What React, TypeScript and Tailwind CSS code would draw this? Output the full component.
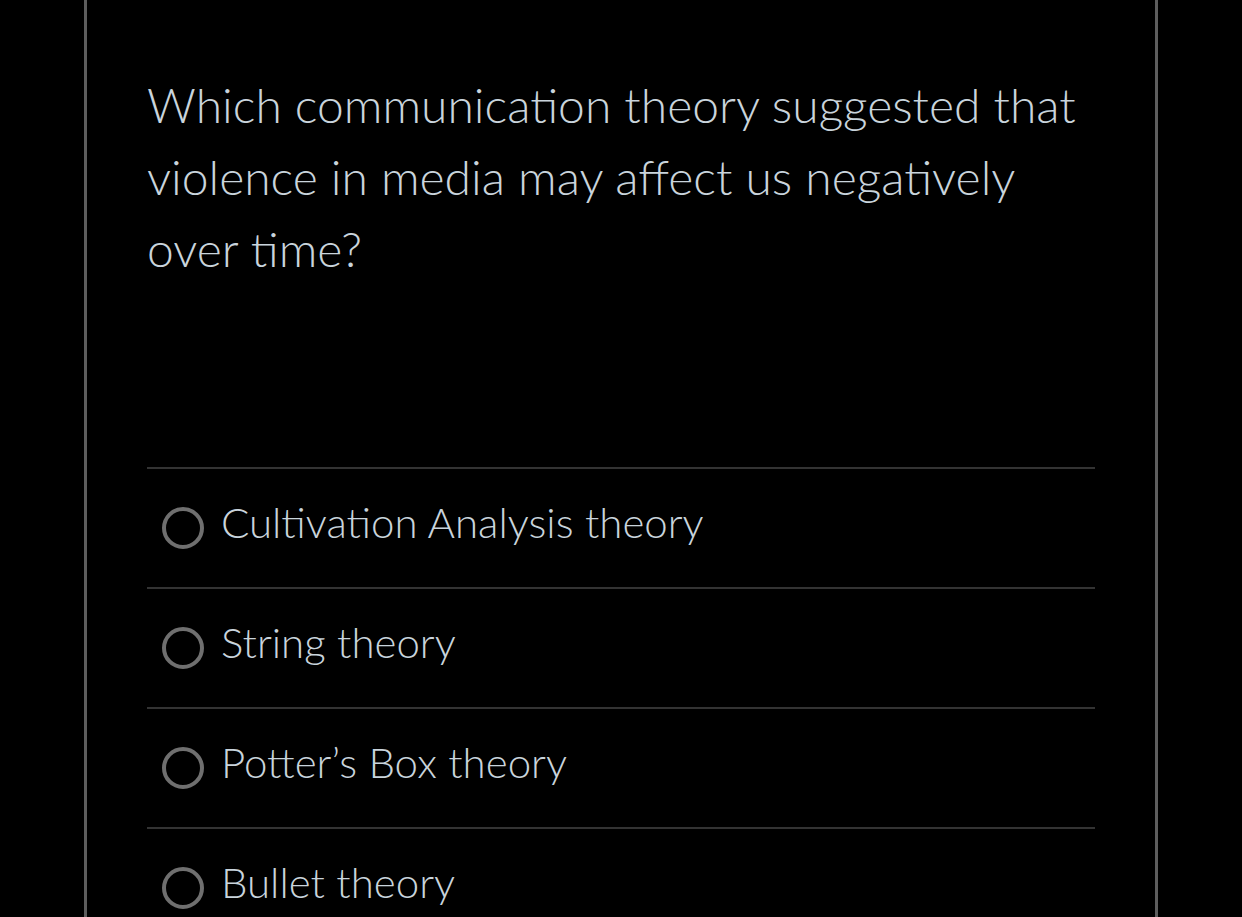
export default function App() {
  const options = [
    "Cultivation Analysis theory",
    "String theory",
    "Potter’s Box theory",
    "Bullet theory",
  ];

  return (
    <div className="min-h-screen h-[917px] overflow-hidden bg-black font-['Lato','Liberation_Sans',sans-serif]">
      <div className="ml-[84px] w-[1074px] min-h-[917px] border-x-[3px] border-[#5d5d5d] px-[60px] pt-[69px]">
        <h1 className="text-[48px] font-light leading-[72px] text-[#c9d4dc] pr-[10px]">
          Which communication theory suggested that violence in media may affect us negatively over time?
        </h1>

        <ul className="mt-[182px]">
          {options.map((opt) => (
            <li
              key={opt}
              className="flex h-[120px] items-center border-t-2 border-[#333333] pl-[15px]"
            >
              <span className="h-[42px] w-[42px] shrink-0 rounded-full border-[4px] border-[#6f6f6f]" />
              <span className="ml-[17px] mb-[12px] text-[42px] font-light leading-none text-[#c9d4dc]">
                {opt}
              </span>
            </li>
          ))}
        </ul>
      </div>
    </div>
  );
}
